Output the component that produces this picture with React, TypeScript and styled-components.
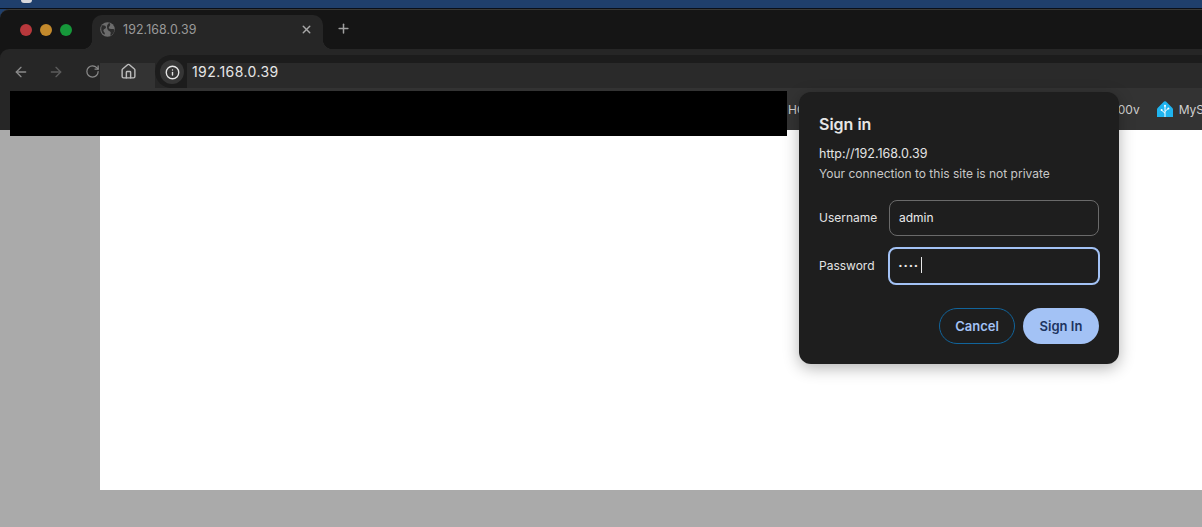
import React from "react";
import styled, { createGlobalStyle } from "styled-components";
import { ArrowLeft, ArrowRight, RotateCw, House, Info, X, Plus } from "lucide-react";

const Global = createGlobalStyle`
  html, body { margin: 0; padding: 0; width: 1202px; height: 527px; overflow: hidden; background: #aaaaaa; }
  * { box-sizing: border-box; }
  body { font-family: Inter, "Liberation Sans", sans-serif; }
`;

const Stage = styled.div`
  position: relative;
  width: 1202px;
  height: 527px;
  background: #aaaaaa;
  overflow: hidden;
`;
const Top = styled.div`
  background: #1f3f6c;
`;
const Desktop = styled.div`
  height: 9px;
  border-bottom: 1px solid #0a0f18;
  padding-left: 21px;
`;
const AppleMark = styled.span`
  display: block;
  width: 11px;
  height: 3px;
  background: #d8d8dc;
  border-radius: 0 0 5px 5px;
`;
const Browser = styled.div`
  background: #151515;
  border-radius: 9px 0 0 0;
  border-top: 1px solid #3a3936;
`;
const TabStrip = styled.div`
  height: 39px;
  display: flex;
  align-items: flex-end;
  padding-left: 20px;
`;
const Lights = styled.div`
  display: flex;
  gap: 8px;
  align-self: center;
  width: 72px;
`;
const Light = styled.span<{ $c: string }>`
  width: 12px;
  height: 12px;
  border-radius: 50%;
  background: ${(p) => p.$c};
`;
const Tab = styled.div`
  position: relative;
  width: 231px;
  height: 34px;
  background: #262626;
  border-radius: 10px 10px 0 0;
  display: flex;
  align-items: center;
  padding: 0 10px 6px 8px;
  color: #9a9a9a;
  font-size: 12.4px;
  gap: 8px;

  &::before,
  &::after {
    content: "";
    position: absolute;
    bottom: 0;
    width: 10px;
    height: 10px;
  }
  &::before {
    left: -10px;
    background: radial-gradient(circle at 0 0, transparent 10px, #262626 10.5px);
  }
  &::after {
    right: -10px;
    background: radial-gradient(circle at 100% 0, transparent 10px, #262626 10.5px);
  }
`;
const TabTitle = styled.span`
  flex: 1;
  letter-spacing: 0.1px;
`;
const NewTab = styled.div`
  margin: 0 0 6px 13px;
  height: 29px;
  display: flex;
  align-items: center;
  color: #a0a0a0;
`;
const Toolbar = styled.div`
  height: 39px;
  background: #262626;
  display: flex;
  align-items: flex-start;
  padding: 6px 0 0 13px;
  border-radius: 9px 0 0 0;
`;
const NavIcon = styled.span<{ $w: number; $c: string }>`
  width: ${(p) => p.$w}px;
  height: 33px;
  display: flex;
  align-items: center;
  color: ${(p) => p.$c};
`;
const HomeBand = styled.div`
  align-self: flex-end;
  height: 25px;
  width: 55px;
  background: #333333;
  display: flex;
  align-items: flex-start;
  padding: 0 0 0 20px;
  color: #bdbdbd;
`;
const Omnibox = styled.div`
  flex: 1;
  height: 33px;
  background: #1c1c1c;
  border-radius: 17px 0 0 17px;
  display: flex;
  align-items: flex-start;
  padding-left: 5px;
  color: #e6e6e6;
`;
const InfoChip = styled.span`
  width: 24px;
  height: 24px;
  margin-top: 5px;
  border-radius: 50%;
  background: #353535;
  display: flex;
  align-items: center;
  justify-content: center;
  color: #e6e6e6;
`;
const UrlBand = styled.div`
  flex: 1;
  align-self: flex-end;
  height: 25px;
  margin-left: 3px;
  padding-left: 5px;
  background: #2a2a2a;
  font-size: 14px;
  letter-spacing: 0.42px;
  line-height: 18px;
`;
const BookmarksRow = styled.div`
  height: 42px;
  background: linear-gradient(90deg, #262626 100px, #333333 100px);
  display: flex;
  align-items: center;
`;
const Redaction = styled.div`
  position: relative;
  z-index: 1;
  align-self: flex-start;
  flex: none;
  width: 777px;
  height: 45px;
  margin: 3px 0 -6px 10px;
  background: #000000;
`;
const Bookmark = styled.span`
  color: #d0d0d0;
  font-size: 12px;
  display: inline-flex;
  align-items: center;
  gap: 6px;
`;
const BookmarkFill = styled.div`
  flex: 1;
  min-width: 0;
  display: flex;
  justify-content: space-between;
  padding-left: 1px;
`;
const Right = styled.div`
  display: flex;
  gap: 17px;
  margin-right: -2px;
`;
const PageArea = styled.div`
  margin-left: 100px;
  height: 360px;
  background: #ffffff;
`;
const Dialog = styled.div`
  position: absolute;
  z-index: 2;
  left: 799px;
  top: 92px;
  width: 320px;
  height: 272px;
  background: #1e1e1e;
  border-radius: 12px;
  padding: 22px 20px 20px;
  box-shadow: 0 4px 16px rgba(0, 0, 0, 0.3);
  color: #e4e4e4;
  font-size: 12px;
`;
const Title = styled.div`
  font-size: 16px;
  font-weight: 600;
  line-height: 21px;
  color: #e6e6e6;
`;
const Origin = styled.div`
  margin-top: 9px;
  line-height: 20px;
  font-size: 12.5px;
`;
const Note = styled.div`
  line-height: 20px;
  color: #c8c8c8;
`;
const Field = styled.div<{ $top: number }>`
  display: flex;
  align-items: center;
  margin-top: ${(p) => p.$top}px;
  height: 36px;
`;
const FieldLabel = styled.span`
  flex: none;
  width: 70px;
  padding-bottom: 2px;
`;
const Input = styled.div<{ $focus?: boolean }>`
  flex: none;
  height: ${(p) => (p.$focus ? 38 : 36)}px;
  margin-left: ${(p) => (p.$focus ? -1 : 0)}px;
  width: ${(p) => (p.$focus ? 212 : 210)}px;
  border: ${(p) => (p.$focus ? "2px solid #a3c2f5" : "1px solid #6a6a6a")};
  border-radius: 8px;
  padding: 0 0 2px 9px;
  display: flex;
  align-items: center;
  color: #ececec;
`;
const Dots = styled.span`
  letter-spacing: 2.4px;
  font-size: 8px;
  font-weight: 700;
  font-family: "Liberation Sans", sans-serif;
`;
const Caret = styled.span`
  width: 1px;
  height: 16px;
  background: #e8e8e8;
  margin-left: 1px;
`;
const Actions = styled.div`
  display: flex;
  justify-content: flex-end;
  gap: 8px;
  margin-top: 24px;
`;
const Button = styled.div<{ $primary?: boolean }>`
  width: 76px;
  height: 36px;
  border-radius: 18px;
  display: flex;
  align-items: center;
  justify-content: center;
  font-size: 13px;
  font-weight: 600;
  background: ${(p) => (p.$primary ? "#a3c2f5" : "transparent")};
  color: ${(p) => (p.$primary ? "#1c3360" : "#a3c2f5")};
  border: ${(p) => (p.$primary ? "none" : "1px solid #11649b")};
`;

const TabGlobe = () => (
  <svg width="15" height="15" viewBox="0 0 15 15">
    <circle cx="7.5" cy="7.5" r="7.3" fill="#6c6c6c" />
    <path d="M2 3.5 C4 3 6 4 6 5.5 C6 7 4 6.5 3.5 8 C3 9.5 5 10 5 12.5 L3.5 12 C1 10 0.7 6 2 3.5 Z" fill="#2c2c2c" />
    <path d="M9.5 1 C11 2 10 4 9 5 C8 6.2 9.5 7 11 7 C12.5 7 14 7 14.5 7.5 C14.5 10 13 12.5 10.5 14 C10 12 11.5 10.5 10 9.5 C8 8.5 7 7.5 7 5 C7 3 8 1.5 9.5 1 Z" fill="#2c2c2c" />
  </svg>
);

const HomeAssistant = () => (
  <svg width="16" height="16" viewBox="0 0 16 16">
    <path d="M7 0.6 Q8 -0.2 9 0.6 L15.4 7 Q16 7.6 16 8.4 V16 H0 V8.4 Q0 7.6 0.6 7 Z" fill="#1fb4ef" />
    <path d="M8 5 V16 M8 12.2 L4.8 9.4 M8 10.4 L11.2 7.6" stroke="#fff" strokeWidth="1" fill="none" />
    <circle cx="8" cy="4.8" r="1" fill="#fff" />
    <circle cx="4.6" cy="9" r="1" fill="#fff" />
    <circle cx="11.4" cy="7.4" r="1" fill="#fff" />
  </svg>
);

export default function App() {
  return (
    <Stage>
      <Global />
      <Top>
        <Desktop>
          <AppleMark />
        </Desktop>
        <Browser>
          <TabStrip>
            <Lights>
              <Light $c="#b8383c" />
              <Light $c="#c48a2c" />
              <Light $c="#16983a" />
            </Lights>
            <Tab>
              <TabGlobe />
              <TabTitle>192.168.0.39</TabTitle>
              <X size={13} color="#a8a8a8" strokeWidth={2.6} />
            </Tab>
            <NewTab>
              <Plus size={15} strokeWidth={2.4} />
            </NewTab>
          </TabStrip>
          <Toolbar>
            <NavIcon $w={35} $c="#8a8a8a"><ArrowLeft size={16} /></NavIcon>
            <NavIcon $w={37} $c="#5c5c5c"><ArrowRight size={16} /></NavIcon>
            <NavIcon $w={15} $c="#8a8a8a"><RotateCw size={15} /></NavIcon>
            <HomeBand><House size={17} /></HomeBand>
            <Omnibox>
              <InfoChip><Info size={15} strokeWidth={2.2} /></InfoChip>
              <UrlBand>192.168.0.39</UrlBand>
            </Omnibox>
          </Toolbar>
          <BookmarksRow>
            <Redaction />
            <BookmarkFill>
              <Bookmark>HO</Bookmark>
              <Right>
                <Bookmark>00v</Bookmark>
                <Bookmark><HomeAssistant />MyS</Bookmark>
              </Right>
            </BookmarkFill>
          </BookmarksRow>
        </Browser>
      </Top>
      <PageArea />
      <Dialog>
        <Title>Sign in</Title>
        <Origin>http://192.168.0.39</Origin>
        <Note>Your connection to this site is not private</Note>
        <Field $top={16}>
          <FieldLabel>Username</FieldLabel>
          <Input>admin</Input>
        </Field>
        <Field $top={12}>
          <FieldLabel>Password</FieldLabel>
          <Input $focus><Dots>••••</Dots><Caret /></Input>
        </Field>
        <Actions>
          <Button>Cancel</Button>
          <Button $primary>Sign In</Button>
        </Actions>
      </Dialog>
    </Stage>
  );
}
